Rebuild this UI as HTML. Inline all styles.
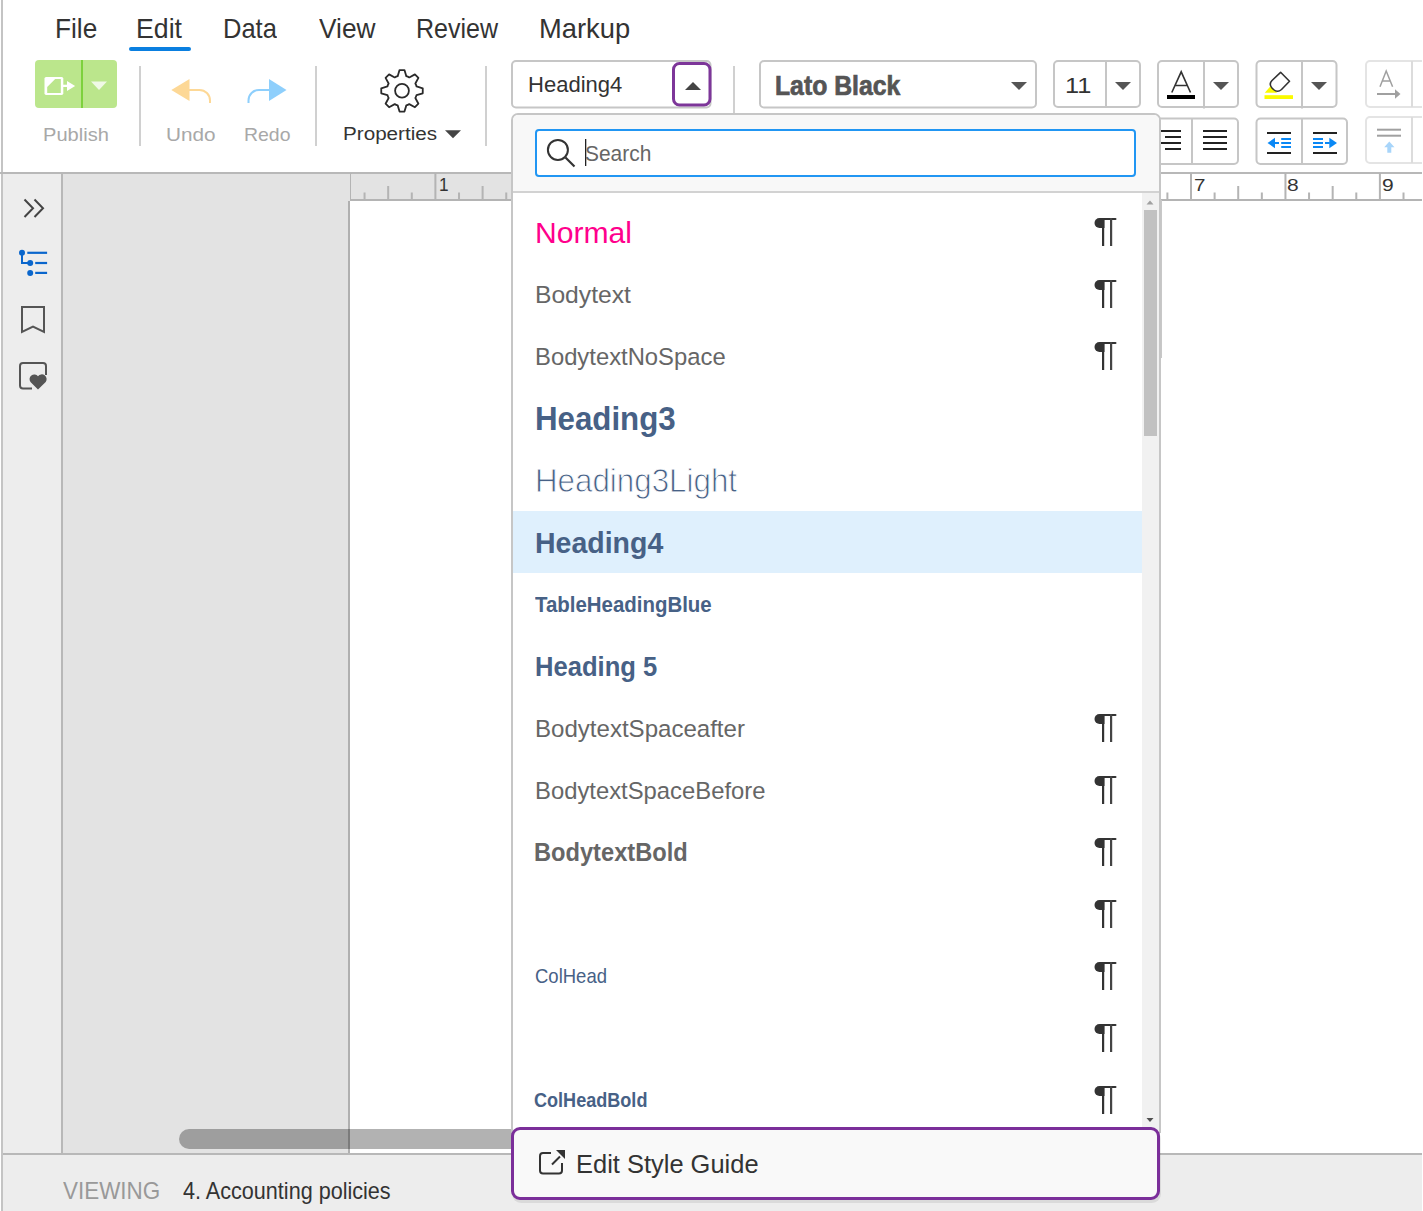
<!DOCTYPE html>
<html><head><meta charset="utf-8"><style>
html,body{margin:0;padding:0;}
body{width:1423px;height:1211px;position:relative;overflow:hidden;background:#fff;font-family:"Liberation Sans",sans-serif;}
.a{position:absolute;box-sizing:border-box;}
.t{position:absolute;white-space:pre;transform-origin:0 0;font-family:"Liberation Sans",sans-serif;}
svg{position:absolute;left:0;top:0;}
</style></head><body>
<!-- backgrounds -->
<div class="a" style="left:0;top:0;width:1423px;height:173px;background:#fff"></div>
<div class="a" style="left:1px;top:0;width:2px;height:1211px;background:#c4c4c4"></div>
<div class="a" style="left:0;top:172px;width:1423px;height:2px;background:#b8b8b8"></div>
<div class="a" style="left:3px;top:174px;width:58px;height:979px;background:#ededed"></div>
<div class="a" style="left:61px;top:174px;width:2px;height:979px;background:#b8b8b8"></div>
<div class="a" style="left:63px;top:174px;width:1360px;height:979px;background:#e3e3e3"></div>
<div class="a" style="left:348px;top:201px;width:1075px;height:952px;background:#fff"></div>
<div class="a" style="left:348px;top:201px;width:2px;height:952px;background:#b0b0b0"></div>
<div class="a" style="left:350px;top:173px;width:2px;height:28px;background:#b4b4b4"></div>
<div class="a" style="left:351px;top:174px;width:1072px;height:26px;background:#fff"></div>
<div class="a" style="left:351px;top:174px;width:180px;height:26px;background:#e3e3e3"></div>
<div class="a" style="left:351px;top:199px;width:1072px;height:2px;background:#b4b4b4"></div>
<div class="a" style="left:1160px;top:200px;width:2px;height:158px;background:#c8c8c8"></div>
<div class="a" style="left:3px;top:1153px;width:1420px;height:58px;background:#ededed"></div>
<div class="a" style="left:3px;top:1153px;width:1420px;height:2px;background:#b8b8b8"></div>
<div class="a" style="left:179px;top:1129px;width:400px;height:20px;border-radius:10px;background:rgba(0,0,0,0.3)"></div>

<svg width="1423" height="1211" viewBox="0 0 1423 1211">
<rect x="363.56" y="192.5" width="2" height="7.5" fill="#b4b4b4"/><rect x="387.17" y="186" width="2" height="14" fill="#b4b4b4"/><rect x="410.79" y="192.5" width="2" height="7.5" fill="#b4b4b4"/><rect x="434.40" y="173" width="2" height="27" fill="#b4b4b4"/><rect x="458.01" y="192.5" width="2" height="7.5" fill="#b4b4b4"/><rect x="481.62" y="186" width="2" height="14" fill="#b4b4b4"/><rect x="505.24" y="192.5" width="2" height="7.5" fill="#b4b4b4"/><rect x="528.85" y="173" width="2" height="27" fill="#b4b4b4"/><rect x="552.46" y="192.5" width="2" height="7.5" fill="#b4b4b4"/><rect x="576.08" y="186" width="2" height="14" fill="#b4b4b4"/><rect x="599.69" y="192.5" width="2" height="7.5" fill="#b4b4b4"/><rect x="623.30" y="173" width="2" height="27" fill="#b4b4b4"/><rect x="646.91" y="192.5" width="2" height="7.5" fill="#b4b4b4"/><rect x="670.52" y="186" width="2" height="14" fill="#b4b4b4"/><rect x="694.14" y="192.5" width="2" height="7.5" fill="#b4b4b4"/><rect x="717.75" y="173" width="2" height="27" fill="#b4b4b4"/><rect x="741.36" y="192.5" width="2" height="7.5" fill="#b4b4b4"/><rect x="764.97" y="186" width="2" height="14" fill="#b4b4b4"/><rect x="788.59" y="192.5" width="2" height="7.5" fill="#b4b4b4"/><rect x="812.20" y="173" width="2" height="27" fill="#b4b4b4"/><rect x="835.81" y="192.5" width="2" height="7.5" fill="#b4b4b4"/><rect x="859.42" y="186" width="2" height="14" fill="#b4b4b4"/><rect x="883.04" y="192.5" width="2" height="7.5" fill="#b4b4b4"/><rect x="906.65" y="173" width="2" height="27" fill="#b4b4b4"/><rect x="930.26" y="192.5" width="2" height="7.5" fill="#b4b4b4"/><rect x="953.88" y="186" width="2" height="14" fill="#b4b4b4"/><rect x="977.49" y="192.5" width="2" height="7.5" fill="#b4b4b4"/><rect x="1001.10" y="173" width="2" height="27" fill="#b4b4b4"/><rect x="1024.71" y="192.5" width="2" height="7.5" fill="#b4b4b4"/><rect x="1048.33" y="186" width="2" height="14" fill="#b4b4b4"/><rect x="1071.94" y="192.5" width="2" height="7.5" fill="#b4b4b4"/><rect x="1095.55" y="173" width="2" height="27" fill="#b4b4b4"/><rect x="1119.16" y="192.5" width="2" height="7.5" fill="#b4b4b4"/><rect x="1142.78" y="186" width="2" height="14" fill="#b4b4b4"/><rect x="1166.39" y="192.5" width="2" height="7.5" fill="#b4b4b4"/><rect x="1190.00" y="173" width="2" height="27" fill="#b4b4b4"/><rect x="1213.61" y="192.5" width="2" height="7.5" fill="#b4b4b4"/><rect x="1237.22" y="186" width="2" height="14" fill="#b4b4b4"/><rect x="1260.84" y="192.5" width="2" height="7.5" fill="#b4b4b4"/><rect x="1284.45" y="173" width="2" height="27" fill="#b4b4b4"/><rect x="1308.06" y="192.5" width="2" height="7.5" fill="#b4b4b4"/><rect x="1331.67" y="186" width="2" height="14" fill="#b4b4b4"/><rect x="1355.29" y="192.5" width="2" height="7.5" fill="#b4b4b4"/><rect x="1378.90" y="173" width="2" height="27" fill="#b4b4b4"/><rect x="1402.51" y="192.5" width="2" height="7.5" fill="#b4b4b4"/>
<!-- edit underline -->
<rect x="129" y="47" width="62" height="4" rx="2" fill="#0a7fe0"/>
<!-- publish -->
<rect x="35" y="60" width="82" height="48" rx="4" fill="#bbe68c"/>
<rect x="81" y="60" width="2" height="48" fill="#7dd13d"/>
<rect x="44.5" y="76.9" width="18.8" height="18" rx="1.6" fill="#fff"/>
<path d="M47.2,86.9 L55.2,79 H60.8 V92.9 H47.2 Z" fill="#bbe68c"/>
<rect x="63" y="84.7" width="4.5" height="2.3" fill="#fff"/>
<path d="M67,81 L75.1,85.9 L67,90.9 Z" fill="#fff"/>
<path d="M91,81.5 H107 L99,90 Z" fill="#f0f9e6"/>
<!-- separators -->
<rect x="139" y="66" width="2" height="80" fill="#d0d0d0"/>
<rect x="315" y="66" width="2" height="80" fill="#d0d0d0"/>
<rect x="485" y="66" width="2" height="80" fill="#d0d0d0"/>
<rect x="733" y="66" width="2" height="50" fill="#d0d0d0"/>
<!-- undo/redo -->
<path d="M171.3,90 L189.5,79 V101 Z" fill="#fdd896"/>
<path d="M189,90 H199.5 A10.5,10.5 0 0 1 210,100.5 V103" fill="none" stroke="#fdd896" stroke-width="2"/>
<path d="M286.5,90 L269,79 V101 Z" fill="#8ecffc"/>
<path d="M269.5,90 H259 A10.5,10.5 0 0 0 248.5,100.5 V103" fill="none" stroke="#8ecffc" stroke-width="2"/>
<!-- gear -->
<path d="M397.68,76.23 L399.53,70.05 L404.47,70.05 L406.32,76.23 A15.2,15.2 0 0 1 409.25,77.44 L414.92,74.38 L418.42,77.88 L415.36,83.55 A15.2,15.2 0 0 1 416.57,86.48 L422.75,88.33 L422.75,93.27 L416.57,95.12 A15.2,15.2 0 0 1 415.36,98.05 L418.42,103.72 L414.92,107.22 L409.25,104.16 A15.2,15.2 0 0 1 406.32,105.37 L404.47,111.55 L399.53,111.55 L397.68,105.37 A15.2,15.2 0 0 1 394.75,104.16 L389.08,107.22 L385.58,103.72 L388.64,98.05 A15.2,15.2 0 0 1 387.43,95.12 L381.25,93.27 L381.25,88.33 L387.43,86.48 A15.2,15.2 0 0 1 388.64,83.55 L385.58,77.88 L389.08,74.38 L394.75,77.44 A15.2,15.2 0 0 1 397.68,76.23 Z" fill="none" stroke="#2a2a2a" stroke-width="1.8" stroke-linejoin="round"/>
<circle cx="402" cy="90.8" r="6.9" fill="none" stroke="#2a2a2a" stroke-width="1.8"/>
<path d="M445,130.3 H461 L453,138.3 Z" fill="#444"/>
<!-- style dropdown -->
<rect x="512" y="61" width="198.5" height="46.5" rx="4" fill="#fff" stroke="#c6c6c6" stroke-width="2"/>
<rect x="673.5" y="63.5" width="36.5" height="41.5" rx="6" fill="#fff" stroke="#7d3699" stroke-width="3"/>
<path d="M685,90 H701 L693,82 Z" fill="#444"/>
<!-- font -->
<rect x="760" y="61" width="276" height="46.5" rx="4" fill="#fff" stroke="#c6c6c6" stroke-width="2"/>
<path d="M1011,82 H1027 L1019,90 Z" fill="#555"/>
<!-- size -->
<rect x="1054" y="61" width="86" height="46" rx="4" fill="#fff" stroke="#c6c6c6" stroke-width="2"/>
<rect x="1105" y="61" width="2" height="46" fill="#c6c6c6"/>
<path d="M1115,82 H1131 L1123,90 Z" fill="#555"/>
<!-- font color -->
<rect x="1158" y="61" width="80" height="46" rx="4" fill="#fff" stroke="#c6c6c6" stroke-width="2"/>
<rect x="1203" y="61" width="2" height="47.5" fill="#c6c6c6"/>
<path d="M1171.8,92.5 L1181.2,71.8 L1190.5,92.5 M1175,85.5 H1187.5" fill="none" stroke="#333" stroke-width="1.6"/>
<rect x="1167" y="95" width="28" height="4" fill="#000"/>
<path d="M1213,82 H1229 L1221,90 Z" fill="#555"/>
<!-- highlight -->
<rect x="1256.5" y="61" width="80" height="46" rx="4" fill="#fff" stroke="#c6c6c6" stroke-width="2"/>
<rect x="1301" y="61" width="2" height="47.5" fill="#c6c6c6"/>
<path d="M1264.8,92.7 H1277 L1272,84.5 Z" fill="#fafa00"/>
<path d="M1280.6,72.3 L1289.5,81.2 L1281.5,89.5 Q1277.5,93 1273.5,89.5 L1272,88 Q1268.5,84 1272,80.5 Z" fill="#fff" stroke="#333" stroke-width="1.6" stroke-linejoin="round"/>
<rect x="1264.5" y="95.2" width="28.5" height="3.8" fill="#fafa00"/>
<path d="M1311,82 H1327 L1319,90 Z" fill="#555"/>
<!-- disabled 1 -->
<rect x="1366" y="61" width="80" height="46" rx="4" fill="#fff" stroke="#e4e4e4" stroke-width="2"/>
<rect x="1411" y="61" width="2" height="46" fill="#dcdcdc"/>
<path d="M1380,86.7 L1386.2,71 L1392.6,86.7 M1382,81 H1390.5" fill="none" stroke="#a0a0a0" stroke-width="1.5"/>
<path d="M1377,93 H1396 V95 H1377 Z" fill="#a0a0a0"/>
<path d="M1395,89.3 L1400.5,94 L1395,98.7 Z" fill="#a0a0a0"/>
<!-- row2 align -->
<rect x="1130" y="118.5" width="108" height="45.5" rx="4" fill="#fff" stroke="#c6c6c6" stroke-width="2"/>
<rect x="1191" y="118" width="2" height="46" fill="#c6c6c6"/>
<g fill="#222"><rect x="1158" y="130" width="23" height="2"/><rect x="1165" y="136" width="16" height="2"/><rect x="1158" y="142" width="23" height="2"/><rect x="1165" y="148" width="16" height="2"/>
<rect x="1203" y="130" width="24" height="2"/><rect x="1203" y="136" width="24" height="2"/><rect x="1203" y="142" width="24" height="2"/><rect x="1203" y="148" width="24" height="2"/></g>
<!-- indent -->
<rect x="1256.5" y="118.5" width="90.5" height="45.5" rx="4" fill="#fff" stroke="#c6c6c6" stroke-width="2"/>
<rect x="1301" y="118" width="2" height="46" fill="#c6c6c6"/>
<g fill="#222"><rect x="1267" y="132" width="24" height="2"/><rect x="1267" y="152" width="24" height="2"/>
<rect x="1313" y="132" width="24" height="2"/><rect x="1313" y="152" width="24" height="2"/></g>
<g fill="#0a88f5"><path d="M1267.5,143 L1275,137.8 V148.2 Z"/><rect x="1274.5" y="142" width="4.5" height="2"/>
<rect x="1281.2" y="138" width="9.8" height="2"/><rect x="1281.2" y="142" width="9.8" height="2"/><rect x="1281.2" y="146" width="9.8" height="2"/>
<rect x="1313" y="138" width="10" height="2"/><rect x="1313" y="142" width="10" height="2"/><rect x="1313" y="146" width="10" height="2"/>
<rect x="1325" y="142" width="4.8" height="2"/><path d="M1337,143 L1329.3,137.8 V148.2 Z"/></g>
<!-- disabled 2 -->
<rect x="1366" y="117" width="80" height="46" rx="4" fill="#fff" stroke="#e4e4e4" stroke-width="2"/>
<rect x="1411" y="117" width="2" height="46" fill="#dcdcdc"/>
<rect x="1377" y="128.7" width="24" height="2" fill="#a0a0a0"/><rect x="1377" y="134.7" width="24" height="2" fill="#a0a0a0"/>
<path d="M1389.3,141.4 L1394.5,147.2 H1391.3 V152.7 H1387.3 V147.2 H1384.2 Z" fill="#a8d5fa"/>
<!-- sidebar icons -->
<path d="M24.5,199.5 L33,208.3 L24.5,217 M34.5,199.5 L43,208.3 L34.5,217" fill="none" stroke="#444" stroke-width="2"/>
<g fill="#0a66cc"><circle cx="22" cy="252.8" r="3"/><rect x="27.3" y="251.7" width="19.8" height="2.2"/><rect x="21" y="253" width="2" height="11"/><rect x="21" y="262" width="8" height="2"/>
<circle cx="30.2" cy="263" r="3"/><rect x="35.2" y="261.9" width="11.9" height="2.2"/><circle cx="30.2" cy="272.9" r="3"/><rect x="35.2" y="271.8" width="11.9" height="2.2"/></g>
<path d="M22,307 H44 V332 L33,326.5 L22,332 Z" fill="none" stroke="#555" stroke-width="2"/>
<path d="M46,375 V366 A3,3 0 0 0 43,363 H23 A3,3 0 0 0 20,366 V385.5 A3,3 0 0 0 23,388.5 H32" fill="none" stroke="#555" stroke-width="2"/>
<path d="M38,389.5 L30.5,382 A4.2,4.2 0 0 1 38,376.3 A4.2,4.2 0 0 1 45.7,382 Z" fill="#555"/>
</svg>

<!-- dropdown panel -->
<div class="a" style="left:511px;top:113px;width:650px;height:1020px;border:2px solid #c6c6c6;border-bottom:none;border-radius:7px 7px 0 0;background:#fff;overflow:hidden">
  <div class="a" style="left:0;top:0;width:646px;height:78px;background:#f8f8f8;border-bottom:2px solid #d2d2d2"></div>
  <div class="a" style="left:22px;top:14px;width:601px;height:48px;border:2px solid #2196f3;border-radius:4px;background:#fff"></div>
  <div class="a" style="left:0;top:396px;width:629px;height:62px;background:#dff0fd"></div>
  <div class="a" style="left:629px;top:78px;width:17px;height:950px;background:#f1f1f1"></div>
  <div class="a" style="left:631px;top:95px;width:13px;height:226px;background:#c1c1c1"></div>
</div>
<svg width="1423" height="1211" viewBox="0 0 1423 1211">
<circle cx="557.9" cy="149.9" r="10" fill="none" stroke="#333" stroke-width="2"/>
<path d="M565.5,157.5 L574.5,166.5" stroke="#333" stroke-width="2.2"/>
<rect x="585" y="139" width="1.3" height="27" fill="#222"/>
<path d="M1146.5,204.5 H1153.5 L1150,200.5 Z" fill="#a0a0a0"/>
<path d="M1146.5,1118 H1153.5 L1150,1122 Z" fill="#505050"/>
<g transform="translate(1093.5,218)" fill="#333"><path d="M10.5,0 H22 a1,1 0 0 1 0,2 H10.5 Z"/><path d="M11,0 H6 A5,5 0 0 0 6,10 H11 Z" fill="#333"/><rect x="8.5" y="0" width="2.2" height="28"/><rect x="16.5" y="0" width="2.2" height="28" fill="#444"/></g><g transform="translate(1093.5,280)" fill="#333"><path d="M10.5,0 H22 a1,1 0 0 1 0,2 H10.5 Z"/><path d="M11,0 H6 A5,5 0 0 0 6,10 H11 Z" fill="#333"/><rect x="8.5" y="0" width="2.2" height="28"/><rect x="16.5" y="0" width="2.2" height="28" fill="#444"/></g><g transform="translate(1093.5,342)" fill="#333"><path d="M10.5,0 H22 a1,1 0 0 1 0,2 H10.5 Z"/><path d="M11,0 H6 A5,5 0 0 0 6,10 H11 Z" fill="#333"/><rect x="8.5" y="0" width="2.2" height="28"/><rect x="16.5" y="0" width="2.2" height="28" fill="#444"/></g><g transform="translate(1093.5,714)" fill="#333"><path d="M10.5,0 H22 a1,1 0 0 1 0,2 H10.5 Z"/><path d="M11,0 H6 A5,5 0 0 0 6,10 H11 Z" fill="#333"/><rect x="8.5" y="0" width="2.2" height="28"/><rect x="16.5" y="0" width="2.2" height="28" fill="#444"/></g><g transform="translate(1093.5,776)" fill="#333"><path d="M10.5,0 H22 a1,1 0 0 1 0,2 H10.5 Z"/><path d="M11,0 H6 A5,5 0 0 0 6,10 H11 Z" fill="#333"/><rect x="8.5" y="0" width="2.2" height="28"/><rect x="16.5" y="0" width="2.2" height="28" fill="#444"/></g><g transform="translate(1093.5,838)" fill="#333"><path d="M10.5,0 H22 a1,1 0 0 1 0,2 H10.5 Z"/><path d="M11,0 H6 A5,5 0 0 0 6,10 H11 Z" fill="#333"/><rect x="8.5" y="0" width="2.2" height="28"/><rect x="16.5" y="0" width="2.2" height="28" fill="#444"/></g><g transform="translate(1093.5,900)" fill="#333"><path d="M10.5,0 H22 a1,1 0 0 1 0,2 H10.5 Z"/><path d="M11,0 H6 A5,5 0 0 0 6,10 H11 Z" fill="#333"/><rect x="8.5" y="0" width="2.2" height="28"/><rect x="16.5" y="0" width="2.2" height="28" fill="#444"/></g><g transform="translate(1093.5,962)" fill="#333"><path d="M10.5,0 H22 a1,1 0 0 1 0,2 H10.5 Z"/><path d="M11,0 H6 A5,5 0 0 0 6,10 H11 Z" fill="#333"/><rect x="8.5" y="0" width="2.2" height="28"/><rect x="16.5" y="0" width="2.2" height="28" fill="#444"/></g><g transform="translate(1093.5,1024)" fill="#333"><path d="M10.5,0 H22 a1,1 0 0 1 0,2 H10.5 Z"/><path d="M11,0 H6 A5,5 0 0 0 6,10 H11 Z" fill="#333"/><rect x="8.5" y="0" width="2.2" height="28"/><rect x="16.5" y="0" width="2.2" height="28" fill="#444"/></g><g transform="translate(1093.5,1086)" fill="#333"><path d="M10.5,0 H22 a1,1 0 0 1 0,2 H10.5 Z"/><path d="M11,0 H6 A5,5 0 0 0 6,10 H11 Z" fill="#333"/><rect x="8.5" y="0" width="2.2" height="28"/><rect x="16.5" y="0" width="2.2" height="28" fill="#444"/></g>
</svg>
<!-- footer -->
<div class="a" style="left:512px;top:1130px;width:649px;height:73px;border-radius:9px;background:rgba(0,0,0,0.08)"></div>
<div class="a" style="left:511px;top:1127px;width:649px;height:73px;border:3px solid #7b2f9a;border-radius:9px;background:#f9f9f9"></div>
<svg width="1423" height="1211" viewBox="0 0 1423 1211">
<path d="M551,1153 H543 A3,3 0 0 0 540,1156 V1170.5 A3,3 0 0 0 543,1173.5 H559 A3,3 0 0 0 562,1170.5 V1163" fill="none" stroke="#333" stroke-width="2"/>
<path d="M552,1164.5 L560,1156.5" stroke="#333" stroke-width="2"/>
<path d="M556,1150 H565 V1159 Z" fill="#333"/>
</svg>
<span class="t" style="left:54.58px;top:15px;font-weight:400;font-size:27.27px;line-height:27.27px;color:#333;transform:scaleX(0.9610)">File</span>
<span class="t" style="left:136.32px;top:16px;font-weight:400;font-size:26.99px;line-height:26.99px;color:#333;transform:scaleX(0.9886)">Edit</span>
<span class="t" style="left:222.81px;top:16px;font-weight:400;font-size:26.99px;line-height:26.99px;color:#333;transform:scaleX(0.9455)">Data</span>
<span class="t" style="left:319.20px;top:16px;font-weight:400;font-size:26.99px;line-height:26.99px;color:#333;transform:scaleX(0.9741)">View</span>
<span class="t" style="left:416.14px;top:16px;font-weight:400;font-size:26.99px;line-height:26.99px;color:#333;transform:scaleX(0.9276)">Review</span>
<span class="t" style="left:538.97px;top:16px;font-weight:400;font-size:26.99px;line-height:26.99px;color:#333;transform:scaleX(1.0126)">Markup</span>
<span class="t" style="left:43.11px;top:125px;font-weight:400;font-size:19.26px;line-height:19.26px;color:#a8a8a8;transform:scaleX(1.0433)">Publish</span>
<span class="t" style="left:165.95px;top:125px;font-weight:400;font-size:19.26px;line-height:19.26px;color:#a8a8a8;transform:scaleX(1.0767)">Undo</span>
<span class="t" style="left:243.98px;top:125px;font-weight:400;font-size:19.26px;line-height:19.26px;color:#a8a8a8;transform:scaleX(1.0093)">Redo</span>
<span class="t" style="left:342.89px;top:125px;font-weight:400;font-size:18.70px;line-height:18.70px;color:#333;transform:scaleX(1.1049)">Properties</span>
<span class="t" style="left:528.14px;top:75px;font-weight:400;font-size:21.37px;line-height:21.37px;color:#333;transform:scaleX(1.0315)">Heading4</span>
<span class="t" style="left:774.55px;top:73px;font-weight:700;font-size:26.71px;line-height:26.71px;color:#555;transform:scaleX(0.9271);-webkit-text-stroke:0.7px #555">Lato Black</span>
<span class="t" style="left:1064.72px;top:76px;font-weight:400;font-size:21.37px;line-height:21.37px;color:#333;transform:scaleX(1.1895)">11</span>
<span class="t" style="left:585.13px;top:143px;font-weight:400;font-size:21.65px;line-height:21.65px;color:#666;transform:scaleX(0.9667)">Search</span>
<span class="t" style="left:535.29px;top:218px;font-weight:400;font-size:29.94px;line-height:29.94px;color:#ff008c;transform:scaleX(1.0054)">Normal</span>
<span class="t" style="left:534.94px;top:283px;font-weight:400;font-size:23.90px;line-height:23.90px;color:#666;transform:scaleX(1.0308)">Bodytext</span>
<span class="t" style="left:535.01px;top:345px;font-weight:400;font-size:23.90px;line-height:23.90px;color:#666;transform:scaleX(0.9968)">BodytextNoSpace</span>
<span class="t" style="left:535.12px;top:402px;font-weight:700;font-size:33.32px;line-height:33.32px;color:#476186;transform:scaleX(0.9381)">Heading3</span>
<span class="t" style="left:535.01px;top:465px;font-weight:400;font-size:32.47px;line-height:32.47px;color:#476186;transform:scaleX(0.9646);-webkit-text-stroke:0.9px #fff">Heading3Light</span>
<span class="t" style="left:534.86px;top:528px;font-weight:700;font-size:29.38px;line-height:29.38px;color:#476186;transform:scaleX(0.9700)">Heading4</span>
<span class="t" style="left:535.10px;top:594px;font-weight:700;font-size:21.23px;line-height:21.23px;color:#476186;transform:scaleX(0.9628)">TableHeadingBlue</span>
<span class="t" style="left:534.58px;top:654px;font-weight:700;font-size:26.71px;line-height:26.71px;color:#476186;transform:scaleX(0.9584)">Heading 5</span>
<span class="t" style="left:535.00px;top:717px;font-weight:400;font-size:24.04px;line-height:24.04px;color:#666;transform:scaleX(1.0010)">BodytextSpaceafter</span>
<span class="t" style="left:535.02px;top:779px;font-weight:400;font-size:24.04px;line-height:24.04px;color:#666;transform:scaleX(0.9913)">BodytextSpaceBefore</span>
<span class="t" style="left:534.31px;top:840px;font-weight:700;font-size:25.02px;line-height:25.02px;color:#666;transform:scaleX(0.9453)">BodytextBold</span>
<span class="t" style="left:535.07px;top:967px;font-weight:400;font-size:19.82px;line-height:19.82px;color:#476186;transform:scaleX(0.9333)">ColHead</span>
<span class="t" style="left:534.27px;top:1091px;font-weight:700;font-size:19.40px;line-height:19.40px;color:#476186;transform:scaleX(0.9317)">ColHeadBold</span>
<span class="t" style="left:576.45px;top:1151px;font-weight:400;font-size:26.15px;line-height:26.15px;color:#333;transform:scaleX(0.9739)">Edit Style Guide</span>
<span class="t" style="left:63.20px;top:1180px;font-weight:400;font-size:23.20px;line-height:23.20px;color:#999;transform:scaleX(0.9677)">VIEWING</span>
<span class="t" style="left:183.27px;top:1180px;font-weight:400;font-size:23.20px;line-height:23.20px;color:#333;transform:scaleX(0.9312)">4. Accounting policies</span>
<span class="t" style="left:439.02px;top:177px;font-weight:400;font-size:17.71px;line-height:17.71px;color:#333;transform:scaleX(0.9750)">1</span>
<span class="t" style="left:1193.50px;top:177px;font-weight:400;font-size:17.15px;line-height:17.15px;color:#333;transform:scaleX(1.2000)">7</span>
<span class="t" style="left:1287.38px;top:177px;font-weight:400;font-size:17.15px;line-height:17.15px;color:#333;transform:scaleX(1.2250)">8</span>
<span class="t" style="left:1382.38px;top:177px;font-weight:400;font-size:17.15px;line-height:17.15px;color:#333;transform:scaleX(1.2250)">9</span>
<div class="a" style="left:1422px;top:0;width:1px;height:1211px;background:#fff"></div>
</body></html>
